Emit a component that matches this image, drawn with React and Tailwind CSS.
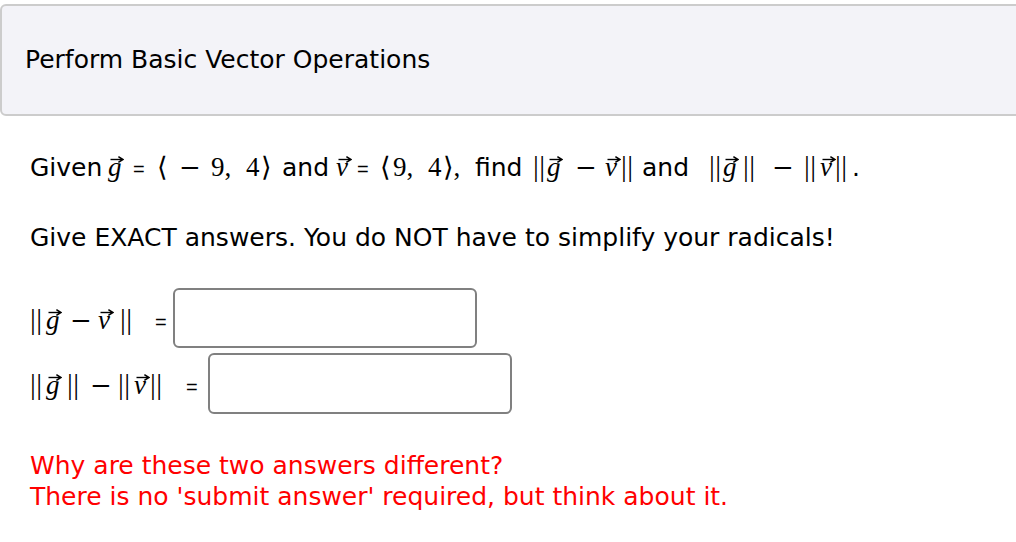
import React from "react";

const SANS = "font-['DejaVu_Sans','Verdana',sans-serif]";
const SERIF = "font-['Liberation_Serif','DejaVu_Serif',serif]";

function Arrow({ left }) {
  return (
    <svg
      className="absolute top-[2px]"
      style={{ left }}
      width="14"
      height="7"
      viewBox="0 0 14 7"
    >
      <path d="M0.5 3.5 L12.2 3.5" stroke="black" strokeWidth="1.4" fill="none" />
      <path d="M8.4 0.7 L12.8 3.5 L8.4 6.3" stroke="black" strokeWidth="1.5" fill="none" />
    </svg>
  );
}

function P({ w, children, className = "" }) {
  return (
    <span className={`shrink-0 inline-block whitespace-pre ${className}`} style={{ width: w }}>
      {children}
    </span>
  );
}

function G({ w }) {
  return (
    <P w={w} className={`relative italic text-[27px] leading-none ${SERIF}`}>
      g
      <Arrow left={2} />
    </P>
  );
}

function V({ w }) {
  return (
    <P w={w} className={`relative italic text-[27px] leading-none ${SERIF}`}>
      v
      <Arrow left={2} />
    </P>
  );
}

function Bars({ w }) {
  return (
    <P w={w} className={`text-[29px] leading-none tracking-[0.5px] ${SERIF}`}>
      ||
    </P>
  );
}

function M({ w, children }) {
  return (
    <P w={w} className={`text-[27px] leading-none ${SERIF}`}>
      {children}
    </P>
  );
}

function Minus({ w }) {
  return (
    <P w={w} className="text-[26px] leading-none font-['DejaVu_Serif',serif]">
      −
    </P>
  );
}

function Eq({ w }) {
  return (
    <P w={w} className="text-[20px] leading-none font-['Liberation_Sans',sans-serif]">
      =
    </P>
  );
}

function T({ w, children }) {
  return <P w={w}>{children}</P>;
}

export default function App() {
  return (
    <div className={`w-[1016px] h-[542px] overflow-hidden bg-white text-black ${SANS}`}>
      <div className="pt-[4px]">
        <div className="w-[1040px] h-[112px] border-2 border-[#cccccc] rounded-[6px] bg-[#f3f3f8] flex items-center pl-[23px]">
          <span className="text-[25px] leading-[30px]">Perform Basic Vector Operations</span>
        </div>
      </div>
      <div className="pl-[30px] text-[25px]">
        <div className="mt-[36px] h-[30px] leading-[30px] flex items-baseline">
          <T w={78}>Given</T>
          <G w={25} />
          <Eq w={24} />
          <M w={22}>⟨</M>
          <Minus w={32} />
          <M w={35}>9,</M>
          <M w={15}>4</M>
          <M w={21}>⟩</M>
          <T w={54}>and</T>
          <V w={21} />
          <Eq w={23} />
          <M w={13}>⟨</M>
          <M w={35}>9,</M>
          <M w={15}>4</M>
          <M w={32}>⟩,</M>
          <T w={58}>find</T>
          <Bars w={14} />
          <G w={28} />
          <Minus w={30} />
          <V w={16} />
          <Bars w={21} />
          <T w={67}>and</T>
          <Bars w={14} />
          <G w={20} />
          <Bars w={29} />
          <Minus w={32} />
          <Bars w={16} />
          <V w={15} />
          <Bars w={17} />
          <T w={10}>.</T>
        </div>
        <p className="mt-[41px] leading-[30px]">
          Give EXACT answers. You do NOT have to simplify your radicals!
        </p>
        <div className="mt-[35px] flex items-center">
          <div className="flex items-baseline pt-[2px]">
            <Bars w={16} />
            <G w={24} />
            <Minus w={28} />
            <V w={22} />
            <Bars w={35} />
            <Eq w={18} />
          </div>
          <div className="w-[304px] h-[60px] border-2 border-[#808080] rounded-[6px] bg-white"></div>
        </div>
        <div className="mt-[5px] flex items-center">
          <div className="flex items-baseline pt-[2px]">
            <Bars w={16} />
            <G w={21} />
            <Bars w={23} />
            <Minus w={28} />
            <Bars w={16} />
            <V w={16} />
            <Bars w={36} />
            <Eq w={22} />
          </div>
          <div className="w-[304px] h-[61px] border-2 border-[#808080] rounded-[6px] bg-white"></div>
        </div>
        <div className="mt-[36px] text-[#ff0000] leading-[31px]">
          <p>Why are these two answers different?</p>
          <p>There is no 'submit answer' required, but think about it.</p>
        </div>
      </div>
    </div>
  );
}
